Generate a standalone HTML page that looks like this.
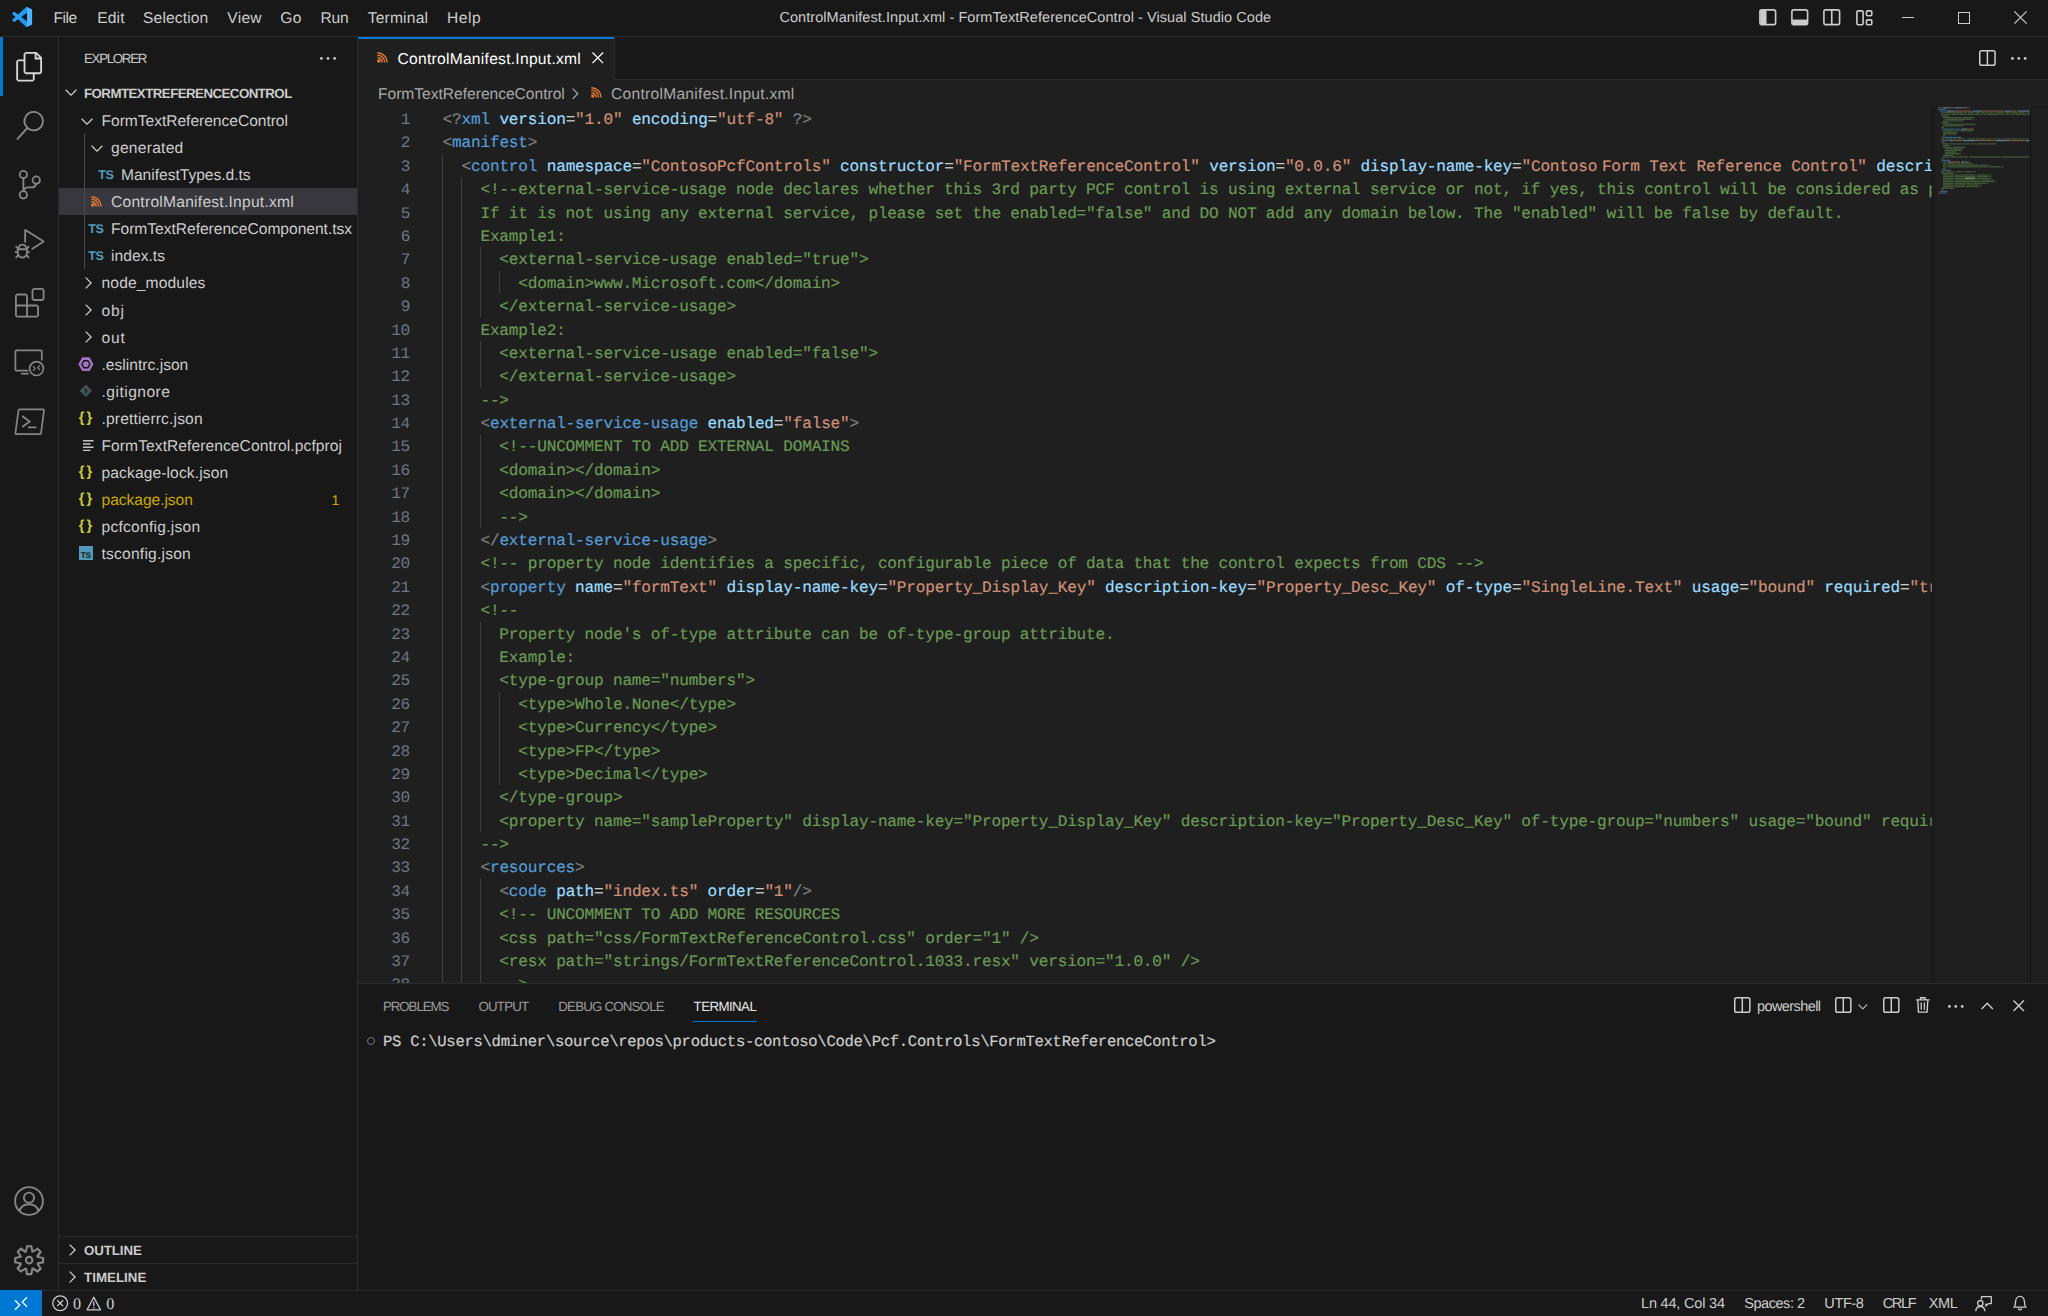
<!DOCTYPE html>
<html><head><meta charset="utf-8"><title>VS Code</title>
<style>
html,body{margin:0;padding:0;background:#181818;}
body{text-rendering:geometricPrecision;width:2048px;height:1316px;position:relative;overflow:hidden;font-family:"Liberation Sans",sans-serif;color:#ccc;}
.t{position:absolute;white-space:pre;display:block;}
.b{position:absolute;}
svg{position:absolute;overflow:visible;}
.code{position:absolute;left:442.6px;top:107px;width:1489px;height:876px;overflow:hidden;font-family:"Liberation Mono",monospace;font-size:16.1px;letter-spacing:-0.195px;}
.cl{-webkit-text-stroke:0.2px currentColor;position:absolute;left:0;height:23.39px;line-height:23.39px;padding-top:2px;white-space:pre;color:#ccc;}
.ln{position:absolute;left:0px;width:52.1px;text-align:right;height:23.39px;line-height:23.39px;padding-top:2px;font-family:"Liberation Mono",monospace;font-size:16.1px;letter-spacing:-0.195px;color:#6e7681;}
.p{color:#808080}.g{color:#569cd6}.a{color:#9cdcfe}.s{color:#ce9178}.c{color:#6a9955}.e{color:#cccccc}
.hs{display:inline-block;width:4.7px}

</style></head>
<body>
<div class="b" style="left:0px;top:0px;width:2048px;height:36px;background:#181818;"></div><div class="b" style="left:0px;top:36px;width:2048px;height:1px;background:#2b2b2b;"></div><div class="b" style="left:58px;top:37px;width:1px;height:1253px;background:#2b2b2b;"></div><div class="b" style="left:357px;top:37px;width:1px;height:1253px;background:#2b2b2b;"></div><div class="b" style="left:358px;top:37px;width:1690px;height:43px;background:#181818;"></div><div class="b" style="left:358px;top:79px;width:1690px;height:1px;background:#2b2b2b;"></div><div class="b" style="left:358px;top:80px;width:1690px;height:903px;background:#1f1f1f;"></div><div class="b" style="left:358px;top:983px;width:1690px;height:1px;background:#2b2b2b;"></div><div class="b" style="left:0px;top:1290px;width:2048px;height:1px;background:#2b2b2b;"></div><svg style="left:11.9px;top:7.1px;" width="20.3" height="19.8" viewBox="0 0 100 100">
<path d="M96.5 10.8 75.9.9a6.2 6.2 0 0 0-7.1 1.2L29.4 38 12.2 25a4.2 4.2 0 0 0-5.3.2L1.4 30.300a4.200 4.200 0 0 0 0 6.200L16.300 50 1.400 63.600a4.200 4.200 0 0 0 0 6.200l5.500 5a4.200 4.200 0 0 0 5.300.200L29.400 62l39.400 36a6.200 6.200 0 0 0 7.100 1.200l20.600-9.900a6.200 6.200 0 0 0 3.500-5.600V16.400a6.200 6.200 0 0 0-3.500-5.600zM75 72.700 45.100 50 75 27.300z" fill="#2a9df4"/>
<path d="M75.900.9a6.200 6.200 0 0 0-7.100 1.200L29.400 38l15.700 12L75 27.300v45.400L45.100 50 29.400 62l39.400 36a6.200 6.200 0 0 0 7.100 1.200l20.600-9.900a6.200 6.200 0 0 0 3.500-5.600V16.400a6.200 6.200 0 0 0-3.500-5.600z" fill="#1d8fe8" opacity=".55"/>
<path d="M68.800 2.100A6.200 6.200 0 0 1 75.900.9l20.600 9.900a6.200 6.200 0 0 1 3.500 5.600v67.200a6.200 6.200 0 0 1-3.500 5.600l-20.600 9.900a6.200 6.200 0 0 1-7.100-1.200c2.300 2.300 6.200.7 6.200-2.600V4.700c0-3.300-3.900-4.900-6.200-2.600z" fill="#4db4ff"/>
</svg><span id="m0" class="t" style="left:53.5px;top:6.70px;height:24px;line-height:24px;font-size:15.6px;color:#cccccc;font-weight:400;font-family:'Liberation Sans',sans-serif;letter-spacing:-0.447px;">File</span><span id="m1" class="t" style="left:97.2px;top:6.70px;height:24px;line-height:24px;font-size:15.6px;color:#cccccc;font-weight:400;font-family:'Liberation Sans',sans-serif;letter-spacing:0.142px;">Edit</span><span id="m2" class="t" style="left:143.1px;top:6.70px;height:24px;line-height:24px;font-size:15.6px;color:#cccccc;font-weight:400;font-family:'Liberation Sans',sans-serif;letter-spacing:0.118px;">Selection</span><span id="m3" class="t" style="left:227.3px;top:6.70px;height:24px;line-height:24px;font-size:15.6px;color:#cccccc;font-weight:400;font-family:'Liberation Sans',sans-serif;letter-spacing:0.256px;">View</span><span id="m4" class="t" style="left:280.2px;top:6.70px;height:24px;line-height:24px;font-size:15.6px;color:#cccccc;font-weight:400;font-family:'Liberation Sans',sans-serif;letter-spacing:0.488px;">Go</span><span id="m5" class="t" style="left:320.5px;top:6.70px;height:24px;line-height:24px;font-size:15.6px;color:#cccccc;font-weight:400;font-family:'Liberation Sans',sans-serif;letter-spacing:-0.205px;">Run</span><span id="m6" class="t" style="left:367.7px;top:6.70px;height:24px;line-height:24px;font-size:15.6px;color:#cccccc;font-weight:400;font-family:'Liberation Sans',sans-serif;letter-spacing:0.195px;">Terminal</span><span id="m7" class="t" style="left:447px;top:6.70px;height:24px;line-height:24px;font-size:15.6px;color:#cccccc;font-weight:400;font-family:'Liberation Sans',sans-serif;letter-spacing:0.507px;">Help</span><span id="title" class="t" style="left:779.4px;top:5.65px;height:24px;line-height:24px;font-size:14.5px;color:#cccccc;font-weight:400;font-family:'Liberation Sans',sans-serif;letter-spacing:0.062px;">ControlManifest.Input.xml - FormTextReferenceControl - Visual Studio Code</span><svg style="left:1759.3px;top:9px;" width="17.5" height="16.5" viewBox="0 0 17.5 16.5"><rect x="0.9" y="0.9" width="15.7" height="14.7" rx="1.8" fill="none" stroke="#cccccc" stroke-width="1.6"/><rect x="1.2" y="1.2" width="6.324999999999999" height="14.1" fill="#cccccc"/></svg><svg style="left:1791.3px;top:9px;" width="17.5" height="16.5" viewBox="0 0 17.5 16.5"><rect x="0.9" y="0.9" width="15.7" height="14.7" rx="1.8" fill="none" stroke="#cccccc" stroke-width="1.6"/><rect x="1.2" y="10.56" width="15.1" height="4.739999999999999" fill="#cccccc"/></svg><svg style="left:1823.3px;top:9px;" width="17.5" height="16.5" viewBox="0 0 17.5 16.5"><rect x="0.9" y="0.9" width="15.7" height="14.7" rx="1.8" fill="none" stroke="#cccccc" stroke-width="1.6"/><rect x="7.95" y="1" width="1.6" height="14.5" fill="#cccccc"/></svg><svg style="left:1856px;top:9.5px;" width="17" height="16" viewBox="0 0 17 16">
<rect x="0.9" y="0.9" width="6.2" height="13.8" rx="1.2" fill="none" stroke="#cccccc" stroke-width="1.6"/>
<rect x="10.4" y="0.9" width="5.4" height="4.8" rx="1.2" fill="none" stroke="#cccccc" stroke-width="1.6"/>
<rect x="10.4" y="9.9" width="5.4" height="4.8" rx="1.2" fill="none" stroke="#cccccc" stroke-width="1.6"/></svg><div class="b" style="left:1902.2px;top:17.2px;width:12.2px;height:1.2px;background:#cccccc;"></div><div class="b" style="left:1957.6px;top:11.5px;width:10.3px;height:10.3px;border:1.2px solid #cccccc;box-sizing:content-box"></div><svg style="left:2014.3px;top:11.3px;" width="13" height="13" viewBox="0 0 13 13"><path d="M0.4 0.4L12.6 12.6M12.6 0.4L0.4 12.6" stroke="#cccccc" stroke-width="1.2" fill="none"/></svg><div class="b" style="left:0px;top:37px;width:2.5px;height:59px;background:#0078d4;"></div><svg style="left:14.75px;top:51.75px;" width="29.5" height="29.5" viewBox="0 0 24 24"><path fill="#d7d7d7"  d="M17.5 0h-9L7 1.500V6H2.500L1 7.500v15.070L2.500 24h12.070L16 22.570V18h4.700l1.300-1.430V4.500L17.500 0zm0 2.120l2.380 2.380H17.500V2.120zm-3 20.380h-12v-15H7v9.070L8.500 18h6v4.500zm6-6h-12v-15H16V6h4.500v10.500z"/></svg><svg style="left:14.75px;top:110.75px;" width="29.5" height="29.5" viewBox="0 0 24 24"><path fill="#868686"  d="M15.250 0a8.250 8.250 0 0 0-6.180 13.720L1 22.880l1.120 1 8.050-9.120A8.251 8.251 0 1 0 15.250.010V0zm0 15a6.750 6.750 0 1 1 0-13.500 6.750 6.750 0 0 1 0 13.500z"/></svg><svg style="left:14.75px;top:169.75px;" width="29.5" height="29.5" viewBox="0 0 24 24"><path fill="#868686"  d="M21.007 8.222A3.738 3.738 0 0 0 15.045 5.200a3.737 3.737 0 0 0 1.156 6.583 2.988 2.988 0 0 1-2.668 1.670h-2.990a4.456 4.456 0 0 0-2.989 1.165V7.400a3.737 3.737 0 1 0-1.494 0v9.117a3.776 3.776 0 1 0 1.816.099 2.990 2.990 0 0 1 2.668-1.667h2.990a4.484 4.484 0 0 0 4.223-3.039 3.736 3.736 0 0 0 3.250-3.687zM4.565 3.738a2.242 2.242 0 1 1 4.484 0 2.242 2.242 0 0 1-4.484 0zm4.484 16.441a2.242 2.242 0 1 1-4.484 0 2.242 2.242 0 0 1 4.484 0zm8.221-9.715a2.242 2.242 0 1 1 0-4.485 2.242 2.242 0 0 1 0 4.485z"/></svg><svg style="left:14.75px;top:228.75px;" width="29.5" height="29.5" viewBox="0 0 24 24"><path fill="#868686"  d="M10.940 13.500l-1.320 1.320a3.730 3.730 0 0 0-7.240 0L1.060 13.500 0 14.560l1.720 1.720-.220.220V18H0v1.500h1.500v.080c.077.489.214.966.410 1.420L0 22.940 1.060 24l1.650-1.650A4.308 4.308 0 0 0 6 24a4.310 4.310 0 0 0 3.290-1.650L10.940 24 12 22.940 10.090 21c.198-.464.336-.951.410-1.450v-.100H12V18h-1.500v-1.500l-.220-.220L12 14.560l-1.060-1.060zM6 13.500a2.250 2.250 0 0 1 2.250 2.250h-4.500A2.250 2.250 0 0 1 6 13.500zm3 6a3.330 3.330 0 0 1-3 3 3.330 3.330 0 0 1-3-3v-2.250h6v2.250zm14.760-9.900v1.260L13.500 17.370V15.600l8.500-5.370L9 2v9.460a5.070 5.070 0 0 0-1.500-.720V.630L8.640 0l15.120 9.600z"/></svg><svg style="left:14.75px;top:287.75px;" width="29.5" height="29.5" viewBox="0 0 24 24"><path fill="#868686"  d="M13.500 1.500L15 0h7.500L24 1.500V9l-1.500 1.500H15L13.500 9V1.500zm1.500 0V9h7.500V1.500H15zM0 15V6l1.500-1.500H9L10.500 6v7.500H18l1.500 1.500v7.500L18 24H1.500L0 22.500V15zm9-1.500V6H1.500v7.500H9zM9 15H1.500v7.500H9V15zm1.500 7.500H18V15h-7.500v7.500z"/></svg><svg style="left:0px;top:340px;" width="59" height="100" viewBox="0 340 59 100">
<path d="M28.300 370.600H16.600a1.200 1.200 0 0 1-1.200-1.200V351.500a1.200 1.200 0 0 1 1.200-1.200H40.600a1.200 1.200 0 0 1 1.200 1.200V360.600" fill="none" stroke="#868686" stroke-width="1.700"/>
<path d="M21 373.700H28.700" fill="none" stroke="#868686" stroke-width="1.700"/>
<circle cx="36.500" cy="368.600" r="6.900" fill="none" stroke="#868686" stroke-width="1.700"/>
<path d="M33.100 366.200l2.100 2.300-2.100 2.300M39.900 365.400l-2.100 2.300 2.100 2.300" fill="none" stroke="#868686" stroke-width="1.200"/>
<path d="M19.600 409.300H43.100a0.900 0.900 0 0 1 0.900 1l-3 23a1.100 1.100 0 0 1-1.100 0.900H16.300a0.900 0.900 0 0 1-0.900-1l3.100-23a1.100 1.100 0 0 1 1.100-0.900z" fill="none" stroke="#868686" stroke-width="1.700" stroke-linejoin="round"/>
<path d="M22.200 416l7.400 5.500-7.400 5.500M28 427.400h8.400" fill="none" stroke="#868686" stroke-width="1.800"/></svg><svg style="left:14.4px;top:1186px;" width="30" height="30" viewBox="0 0 30 30">
<circle cx="15" cy="15" r="13.900" fill="none" stroke="#868686" stroke-width="1.900"/>
<circle cx="15" cy="11.700" r="5.100" fill="none" stroke="#868686" stroke-width="1.900"/>
<path d="M5.600 25.200c1-4.500 4.800-7 9.400-7s8.400 2.500 9.400 7" fill="none" stroke="#868686" stroke-width="1.900"/></svg><svg style="left:12.2px;top:1243px;" width="34.3" height="34.3" viewBox="0 0 16 16"><path fill="#868686" fill-rule="evenodd" d="M9.100 4.400L8.600 2H7.400l-.500 2.400-.700.300-2-1.300-.900.800 1.300 2-.200.700-2.400.500v1.200l2.400.500.300.800-1.300 2 .800.800 2-1.300.800.300.400 2.300h1.200l.500-2.400.800-.300 2 1.300.800-.800-1.300-2 .300-.800 2.300-.400V7.400l-2.400-.500-.300-.800 1.300-2-.800-.800-2 1.300-.700-.200zM9.400 1l.500 2.400L12 2.100l2 2-1.400 2.100 2.400.400v2.800l-2.400.500L14 12l-2 2-2.100-1.400-.500 2.400H6.600l-.500-2.400L4 13.900l-2-2 1.400-2.100L1 9.400V6.600l2.400-.500L2.100 4l2-2 2.100 1.400.400-2.400h2.800zm.600 7c0 1.100-.900 2-2 2s-2-.900-2-2 .900-2 2-2 2 .900 2 2zM8 9c.6 0 1-.4 1-1s-.4-1-1-1-1 .4-1 1 .4 1 1 1z"/></svg><span id="sb_title" class="t" style="left:84px;top:46.50px;height:24px;line-height:24px;font-size:13.3px;color:#cccccc;font-weight:400;font-family:'Liberation Sans',sans-serif;letter-spacing:-1.300px;">EXPLORER</span><svg style="left:320.4px;top:56.9px;" width="16.0" height="2.8" viewBox="0 0 16.0 2.8"><circle cx="1.40" cy="1.4" r="1.4" fill="#cccccc"/><circle cx="8.00" cy="1.4" r="1.4" fill="#cccccc"/><circle cx="14.60" cy="1.4" r="1.4" fill="#cccccc"/></svg><svg style="left:64.5px;top:89.4px;" width="12.0" height="7.0" viewBox="0 0 12 7"><path d="M0.6 0.700L6 6.100 11.400 0.700" fill="none" stroke="#cccccc" stroke-width="1.300"/></svg><span id="sb_root" class="t" style="left:84px;top:82.30px;height:24px;line-height:24px;font-size:13.3px;color:#cccccc;font-weight:700;font-family:'Liberation Sans',sans-serif;letter-spacing:-0.547px;">FORMTEXTREFERENCECONTROL</span><div class="b" style="left:59px;top:188.18px;width:298px;height:27.06px;background:#37373d;"></div><div class="b" style="left:84px;top:134.06px;width:1px;height:135.29999999999998px;background:#4a4a4a;"></div><span id="r0" class="t" style="left:101.5px;top:110.13px;height:24px;line-height:24px;font-size:15.6px;color:#cccccc;font-weight:400;font-family:'Liberation Sans',sans-serif;letter-spacing:-0.031px;">FormTextReferenceControl</span><svg style="left:81.3px;top:117.53px;" width="12.0" height="7.0" viewBox="0 0 12 7"><path d="M0.6 0.700L6 6.100 11.400 0.700" fill="none" stroke="#cccccc" stroke-width="1.300"/></svg><span id="r1" class="t" style="left:111px;top:137.19px;height:24px;line-height:24px;font-size:15.6px;color:#cccccc;font-weight:400;font-family:'Liberation Sans',sans-serif;letter-spacing:0.258px;">generated</span><svg style="left:91.2px;top:144.59px;" width="12.0" height="7.0" viewBox="0 0 12 7"><path d="M0.6 0.700L6 6.100 11.400 0.700" fill="none" stroke="#cccccc" stroke-width="1.300"/></svg><span id="r2" class="t" style="left:121px;top:164.25px;height:24px;line-height:24px;font-size:15.6px;color:#cccccc;font-weight:400;font-family:'Liberation Sans',sans-serif;letter-spacing:-0.024px;">ManifestTypes.d.ts</span><span id="ts98_174" class="t" style="left:98.3px;top:162.85px;height:24px;line-height:24px;font-size:12.6px;color:#519aba;font-weight:700;font-family:'Liberation Sans',sans-serif;letter-spacing:0.000px;letter-spacing:-0.4px;">TS</span><span id="r3" class="t" style="left:111px;top:191.31px;height:24px;line-height:24px;font-size:15.6px;color:#cccccc;font-weight:400;font-family:'Liberation Sans',sans-serif;letter-spacing:0.249px;">ControlManifest.Input.xml</span><svg style="left:90.5px;top:196.31px;" width="10.5" height="10.8" viewBox="0 0 21 21.600"><circle cx="3.600" cy="18" r="3.600" fill="#e37933"/>
<path d="M0.600 11.200a9.800 9.800 0 0 1 9.800 9.800" fill="none" stroke="#e37933" stroke-width="2.900"/>
<path d="M0.600 6.300a14.700 14.700 0 0 1 14.700 14.700" fill="none" stroke="#e37933" stroke-width="2.900"/>
<path d="M0.600 1.400a19.600 19.600 0 0 1 19.600 19.600" fill="none" stroke="#e37933" stroke-width="2.900"/></svg><span id="r4" class="t" style="left:111px;top:218.37px;height:24px;line-height:24px;font-size:15.6px;color:#cccccc;font-weight:400;font-family:'Liberation Sans',sans-serif;letter-spacing:-0.025px;">FormTextReferenceComponent.tsx</span><span id="ts88_228" class="t" style="left:88.3px;top:216.97px;height:24px;line-height:24px;font-size:12.6px;color:#519aba;font-weight:700;font-family:'Liberation Sans',sans-serif;letter-spacing:0.000px;letter-spacing:-0.4px;">TS</span><span id="r5" class="t" style="left:111px;top:245.43px;height:24px;line-height:24px;font-size:15.6px;color:#cccccc;font-weight:400;font-family:'Liberation Sans',sans-serif;letter-spacing:0.036px;">index.ts</span><span id="ts88_255" class="t" style="left:88.3px;top:244.03px;height:24px;line-height:24px;font-size:12.6px;color:#519aba;font-weight:700;font-family:'Liberation Sans',sans-serif;letter-spacing:0.000px;letter-spacing:-0.4px;">TS</span><span id="r6" class="t" style="left:101.5px;top:272.49px;height:24px;line-height:24px;font-size:15.6px;color:#cccccc;font-weight:400;font-family:'Liberation Sans',sans-serif;letter-spacing:0.144px;">node_modules</span><svg style="left:84.8px;top:276.89px;" width="7.0" height="12.0" viewBox="0 0 7 12"><path d="M0.700 0.600L6.100 6 0.700 11.400" fill="none" stroke="#cccccc" stroke-width="1.300"/></svg><span id="r7" class="t" style="left:101.5px;top:299.55px;height:24px;line-height:24px;font-size:15.6px;color:#cccccc;font-weight:400;font-family:'Liberation Sans',sans-serif;letter-spacing:0.800px;">obj</span><svg style="left:84.8px;top:303.94999999999993px;" width="7.0" height="12.0" viewBox="0 0 7 12"><path d="M0.700 0.600L6.100 6 0.700 11.400" fill="none" stroke="#cccccc" stroke-width="1.300"/></svg><span id="r8" class="t" style="left:101.5px;top:326.61px;height:24px;line-height:24px;font-size:15.6px;color:#cccccc;font-weight:400;font-family:'Liberation Sans',sans-serif;letter-spacing:0.800px;">out</span><svg style="left:84.8px;top:331.01px;" width="7.0" height="12.0" viewBox="0 0 7 12"><path d="M0.700 0.600L6.100 6 0.700 11.400" fill="none" stroke="#cccccc" stroke-width="1.300"/></svg><span id="r9" class="t" style="left:101.5px;top:353.67px;height:24px;line-height:24px;font-size:15.6px;color:#cccccc;font-weight:400;font-family:'Liberation Sans',sans-serif;letter-spacing:0.010px;">.eslintrc.json</span><svg style="left:78px;top:356.9699999999999px;" width="15.8" height="14.4" viewBox="0 0 15.800 14.400"><path d="M4.200 0.300h7.400l3.900 6.900-3.900 6.900H4.200L0.300 7.200z" fill="#a074c4"/><path d="M5.900 3.700h4l2 3.500-2 3.500h-4l-2-3.500z" fill="none" stroke="#181818" stroke-width="1.400"/></svg><span id="r10" class="t" style="left:101.5px;top:380.73px;height:24px;line-height:24px;font-size:15.6px;color:#cccccc;font-weight:400;font-family:'Liberation Sans',sans-serif;letter-spacing:0.472px;">.gitignore</span><svg style="left:79px;top:384.12999999999994px;" width="13.6" height="13.6" viewBox="0 0 13 13"><rect x="2.300" y="2.300" width="8.400" height="8.400" fill="#41535b" transform="rotate(45 6.500 6.500)"/><path d="M5 4.200l3 3M6.500 5.700v3.500" stroke="#181818" stroke-width="1" fill="none"/></svg><span id="r11" class="t" style="left:101.5px;top:407.79px;height:24px;line-height:24px;font-size:15.6px;color:#cccccc;font-weight:400;font-family:'Liberation Sans',sans-serif;letter-spacing:0.154px;">.prettierrc.json</span><span id="js418" class="t" style="left:78.7px;top:405.89px;height:24px;line-height:24px;font-size:14.6px;color:#cbcb41;font-weight:700;font-family:'Liberation Sans',sans-serif;letter-spacing:0.000px;letter-spacing:-0.9px;">{ }</span><span id="r12" class="t" style="left:101.5px;top:434.85px;height:24px;line-height:24px;font-size:15.6px;color:#cccccc;font-weight:400;font-family:'Liberation Sans',sans-serif;letter-spacing:0.070px;">FormTextReferenceControl.pcfproj</span><svg style="left:83px;top:439.74999999999994px;" width="10.5" height="11" viewBox="0 0 10.500 11"><path d="M0 0.800h10.500M0 4h7.500M0 7.200h10.500M0 10.400h7.500" stroke="#c5c5c5" stroke-width="1.400" fill="none"/></svg><span id="r13" class="t" style="left:101.5px;top:461.91px;height:24px;line-height:24px;font-size:15.6px;color:#cccccc;font-weight:400;font-family:'Liberation Sans',sans-serif;letter-spacing:0.111px;">package-lock.json</span><span id="js472" class="t" style="left:78.7px;top:460.01px;height:24px;line-height:24px;font-size:14.6px;color:#cbcb41;font-weight:700;font-family:'Liberation Sans',sans-serif;letter-spacing:0.000px;letter-spacing:-0.9px;">{ }</span><span id="r14" class="t" style="left:101.5px;top:488.97px;height:24px;line-height:24px;font-size:15.6px;color:#cca700;font-weight:400;font-family:'Liberation Sans',sans-serif;letter-spacing:-0.046px;">package.json</span><span id="js499" class="t" style="left:78.7px;top:487.07px;height:24px;line-height:24px;font-size:14.6px;color:#cbcb41;font-weight:700;font-family:'Liberation Sans',sans-serif;letter-spacing:0.000px;letter-spacing:-0.9px;">{ }</span><span id="r15" class="t" style="left:101.5px;top:516.03px;height:24px;line-height:24px;font-size:15.6px;color:#cccccc;font-weight:400;font-family:'Liberation Sans',sans-serif;letter-spacing:0.249px;">pcfconfig.json</span><span id="js526" class="t" style="left:78.7px;top:514.13px;height:24px;line-height:24px;font-size:14.6px;color:#cbcb41;font-weight:700;font-family:'Liberation Sans',sans-serif;letter-spacing:0.000px;letter-spacing:-0.9px;">{ }</span><span id="r16" class="t" style="left:101.5px;top:543.09px;height:24px;line-height:24px;font-size:15.6px;color:#cccccc;font-weight:400;font-family:'Liberation Sans',sans-serif;letter-spacing:0.218px;">tsconfig.json</span><div class="b" style="left:79px;top:546.49px;width:14px;height:14px;background:#519aba;"></div><span id="tsc" class="t" style="left:80.7px;top:543.29px;height:24px;line-height:24px;font-size:8.3px;color:#181818;font-weight:700;font-family:'Liberation Sans',sans-serif;letter-spacing:0.000px;letter-spacing:-0.3px;">TS</span><span id="badge" class="t" style="left:331.5px;top:488.87px;height:24px;line-height:24px;font-size:14.2px;color:#cca700;font-weight:400;font-family:'Liberation Sans',sans-serif;letter-spacing:0.000px;">1</span><div class="b" style="left:59px;top:1236px;width:298px;height:1px;background:#2b2b2b;"></div><div class="b" style="left:59px;top:1263px;width:298px;height:1px;background:#2b2b2b;"></div><svg style="left:68.5px;top:1244.0px;" width="7.0" height="12.0" viewBox="0 0 7 12"><path d="M0.700 0.600L6.100 6 0.700 11.400" fill="none" stroke="#cccccc" stroke-width="1.300"/></svg><svg style="left:68.5px;top:1271.0px;" width="7.0" height="12.0" viewBox="0 0 7 12"><path d="M0.700 0.600L6.100 6 0.700 11.400" fill="none" stroke="#cccccc" stroke-width="1.300"/></svg><span id="outline" class="t" style="left:84px;top:1238.70px;height:24px;line-height:24px;font-size:13.3px;color:#cccccc;font-weight:700;font-family:'Liberation Sans',sans-serif;letter-spacing:-0.093px;">OUTLINE</span><span id="timeline" class="t" style="left:84px;top:1265.70px;height:24px;line-height:24px;font-size:13.3px;color:#cccccc;font-weight:700;font-family:'Liberation Sans',sans-serif;letter-spacing:0.034px;">TIMELINE</span><div class="b" style="left:358px;top:37px;width:256px;height:43px;background:#1f1f1f;"></div><div class="b" style="left:358px;top:37px;width:256px;height:2px;background:#0078d4;"></div><div class="b" style="left:614px;top:37px;width:1px;height:43px;background:#2b2b2b;"></div><svg style="left:377.1px;top:52.4px;" width="10.5" height="10.8" viewBox="0 0 21 21.600"><circle cx="3.600" cy="18" r="3.600" fill="#e37933"/>
<path d="M0.600 11.200a9.800 9.800 0 0 1 9.800 9.800" fill="none" stroke="#e37933" stroke-width="2.900"/>
<path d="M0.600 6.300a14.700 14.700 0 0 1 14.700 14.700" fill="none" stroke="#e37933" stroke-width="2.900"/>
<path d="M0.600 1.400a19.600 19.600 0 0 1 19.600 19.600" fill="none" stroke="#e37933" stroke-width="2.900"/></svg><span id="tab" class="t" style="left:397.5px;top:48.10px;height:24px;line-height:24px;font-size:15.6px;color:#ffffff;font-weight:400;font-family:'Liberation Sans',sans-serif;letter-spacing:0.270px;">ControlManifest.Input.xml</span><svg style="left:592px;top:51.8px;" width="11.6" height="11.6" viewBox="0 0 12 12"><path d="M0.500 0.500L11.500 11.500M11.500 0.500L0.500 11.500" stroke="#ffffff" stroke-width="1.350" fill="none"/></svg><svg style="left:1979px;top:49.5px;" width="16.8" height="16" viewBox="0 0 16.8 16"><rect x="0.75" y="0.75" width="15.3" height="14.5" rx="1.800" fill="none" stroke="#cccccc" stroke-width="1.5"/><path d="M8.4 0.75V15.25" stroke="#cccccc" stroke-width="1.5"/></svg><svg style="left:2011.3px;top:56.6px;" width="15.600000000000001" height="2.8" viewBox="0 0 15.600000000000001 2.8"><circle cx="1.40" cy="1.4" r="1.4" fill="#cccccc"/><circle cx="7.80" cy="1.4" r="1.4" fill="#cccccc"/><circle cx="14.20" cy="1.4" r="1.4" fill="#cccccc"/></svg><span id="bc1" class="t" style="left:378px;top:83.30px;height:24px;line-height:24px;font-size:15.6px;color:#a9a9a9;font-weight:400;font-family:'Liberation Sans',sans-serif;letter-spacing:-0.018px;">FormTextReferenceControl</span><svg style="left:572.175px;top:87.6px;" width="6.6499999999999995" height="11.399999999999999" viewBox="0 0 7 12"><path d="M0.700 0.600L6.100 6 0.700 11.400" fill="none" stroke="#a9a9a9" stroke-width="1.300"/></svg><svg style="left:590.8px;top:87.39999999999999px;" width="10.5" height="10.8" viewBox="0 0 21 21.600"><circle cx="3.600" cy="18" r="3.600" fill="#e37933"/>
<path d="M0.600 11.200a9.800 9.800 0 0 1 9.800 9.800" fill="none" stroke="#e37933" stroke-width="2.900"/>
<path d="M0.600 6.300a14.700 14.700 0 0 1 14.700 14.700" fill="none" stroke="#e37933" stroke-width="2.900"/>
<path d="M0.600 1.400a19.600 19.600 0 0 1 19.600 19.600" fill="none" stroke="#e37933" stroke-width="2.900"/></svg><span id="bc2" class="t" style="left:611px;top:83.30px;height:24px;line-height:24px;font-size:15.6px;color:#a9a9a9;font-weight:400;font-family:'Liberation Sans',sans-serif;letter-spacing:0.270px;">ControlManifest.Input.xml</span><span id="pt0" class="t" style="left:383px;top:994.90px;height:24px;line-height:24px;font-size:13.3px;color:#9d9d9d;font-weight:400;font-family:'Liberation Sans',sans-serif;letter-spacing:-1.072px;">PROBLEMS</span><span id="pt1" class="t" style="left:478.4px;top:994.90px;height:24px;line-height:24px;font-size:13.3px;color:#9d9d9d;font-weight:400;font-family:'Liberation Sans',sans-serif;letter-spacing:-0.774px;">OUTPUT</span><span id="pt2" class="t" style="left:558.3px;top:994.90px;height:24px;line-height:24px;font-size:13.3px;color:#9d9d9d;font-weight:400;font-family:'Liberation Sans',sans-serif;letter-spacing:-0.810px;">DEBUG CONSOLE</span><span id="pt3" class="t" style="left:693.6px;top:994.90px;height:24px;line-height:24px;font-size:13.3px;color:#e7e7e7;font-weight:400;font-family:'Liberation Sans',sans-serif;letter-spacing:-0.576px;">TERMINAL</span><div class="b" style="left:693px;top:1020.5px;width:64px;height:1.3px;background:#0078d4;"></div><div class="b" style="left:366.9px;top:1036.5px;width:6.4px;height:6.4px;border-radius:50%;border:1.7px solid #757575;box-sizing:content-box"></div><span id="term" class="t" style="left:383px;top:1029.50px;height:24px;line-height:24px;font-size:15.6px;color:#cccccc;font-weight:400;font-family:'Liberation Mono',monospace;letter-spacing:-0.309px;-webkit-text-stroke:0.2px currentColor;">PS C:\Users\dminer\source\repos\products-contoso\Code\Pcf.Controls\FormTextReferenceControl&gt;</span><svg style="left:1734px;top:997.2px;" width="16.6" height="16" viewBox="0 0 16.6 16"><rect x="0.75" y="0.75" width="15.100000000000001" height="14.5" rx="1.800" fill="none" stroke="#cccccc" stroke-width="1.5"/><path d="M8.3 0.75V15.25" stroke="#cccccc" stroke-width="1.5"/></svg><span id="pwsh" class="t" style="left:1757px;top:994.80px;height:24px;line-height:24px;font-size:14.5px;color:#cccccc;font-weight:400;font-family:'Liberation Sans',sans-serif;letter-spacing:-0.581px;">powershell</span><svg style="left:1835.2px;top:997.2px;" width="16.6" height="16" viewBox="0 0 16.6 16"><rect x="0.75" y="0.75" width="15.100000000000001" height="14.5" rx="1.800" fill="none" stroke="#cccccc" stroke-width="1.5"/><path d="M8.3 0.75V15.25" stroke="#cccccc" stroke-width="1.5"/></svg><svg style="left:1857.9px;top:1003.7px;" width="9.600000000000001" height="5.6000000000000005" viewBox="0 0 12 7"><path d="M0.6 0.700L6 6.100 11.400 0.700" fill="none" stroke="#cccccc" stroke-width="1.300"/></svg><svg style="left:1883.3px;top:997.2px;" width="16.6" height="16" viewBox="0 0 16.6 16"><rect x="0.75" y="0.75" width="15.100000000000001" height="14.5" rx="1.800" fill="none" stroke="#cccccc" stroke-width="1.5"/><path d="M8.3 0.75V15.25" stroke="#cccccc" stroke-width="1.5"/></svg><svg style="left:1915.5px;top:997.3px;" width="13.6" height="15.8" viewBox="0 0 13.600 15.800"><path d="M0 2.900h13.600M4.500 2.700V0.700h4.600v2" fill="none" stroke="#cccccc" stroke-width="1.400"/>
<path d="M1.800 3.200l0.700 11.900h8.600l0.700-11.900" fill="none" stroke="#cccccc" stroke-width="1.400"/>
<path d="M5.200 5.500v7.200M8.400 5.500v7.200" stroke="#cccccc" stroke-width="1.300"/></svg><svg style="left:1947.6px;top:1004.6px;" width="15.600000000000001" height="2.8" viewBox="0 0 15.600000000000001 2.8"><circle cx="1.40" cy="1.4" r="1.4" fill="#cccccc"/><circle cx="7.80" cy="1.4" r="1.4" fill="#cccccc"/><circle cx="14.20" cy="1.4" r="1.4" fill="#cccccc"/></svg><svg style="left:1981px;top:1001.5px;" width="12.4" height="7.6" viewBox="0 0 12.400 7.600"><path d="M0.600 7L6.200 1.300 11.800 7" fill="none" stroke="#cccccc" stroke-width="1.400"/></svg><svg style="left:2013px;top:1000.4px;" width="11.4" height="11.4" viewBox="0 0 11.400 11.400"><path d="M0.500 0.500L10.900 10.900M10.900 0.500L0.500 10.900" stroke="#cccccc" stroke-width="1.400" fill="none"/></svg><div class="b" style="left:0px;top:1290px;width:42px;height:26px;background:#0078d4;"></div><svg style="left:14px;top:1295.5px;" width="14" height="15" viewBox="0 0 14 15"><path d="M1 4.200L5.800 9 1 13.800M13 1.200L8.200 6 13 10.800" fill="none" stroke="#ffffff" stroke-width="1.250"/></svg><svg style="left:52px;top:1295.3px;" width="16.4" height="16.4" viewBox="0 0 16.400 16.400"><circle cx="8.200" cy="8.200" r="7.400" fill="none" stroke="#cccccc" stroke-width="1.300"/><path d="M5.300 5.300l5.800 5.800M11.100 5.300l-5.800 5.800" stroke="#cccccc" stroke-width="1.300"/></svg><span id="st_e" class="t" style="left:73px;top:1292.20px;height:24px;line-height:24px;font-size:16.2px;color:#cccccc;font-weight:400;font-family:'Liberation Sans',sans-serif;letter-spacing:0.000px;font-family:'Liberation Serif',serif;">0</span><svg style="left:86px;top:1295.8px;" width="15.6" height="14.6" viewBox="0 0 15.400 14.600"><path d="M7.700 1.300L14.400 13.800H1z" fill="none" stroke="#cccccc" stroke-width="1.300" stroke-linejoin="round"/><path d="M7.700 5.600v4.300M7.700 11v1.500" stroke="#cccccc" stroke-width="1.300"/></svg><span id="st_w" class="t" style="left:106.2px;top:1292.20px;height:24px;line-height:24px;font-size:16.2px;color:#cccccc;font-weight:400;font-family:'Liberation Sans',sans-serif;letter-spacing:0.000px;font-family:'Liberation Serif',serif;">0</span><span id="st1" class="t" style="left:1641px;top:1292.00px;height:24px;line-height:24px;font-size:14.5px;color:#cccccc;font-weight:400;font-family:'Liberation Sans',sans-serif;letter-spacing:-0.189px;">Ln 44, Col 34</span><span id="st2" class="t" style="left:1744.3px;top:1292.00px;height:24px;line-height:24px;font-size:14.5px;color:#cccccc;font-weight:400;font-family:'Liberation Sans',sans-serif;letter-spacing:-0.463px;">Spaces: 2</span><span id="st3" class="t" style="left:1824.3px;top:1292.00px;height:24px;line-height:24px;font-size:14.5px;color:#cccccc;font-weight:400;font-family:'Liberation Sans',sans-serif;letter-spacing:-0.373px;">UTF-8</span><span id="st4" class="t" style="left:1882.7px;top:1292.00px;height:24px;line-height:24px;font-size:14.5px;color:#cccccc;font-weight:400;font-family:'Liberation Sans',sans-serif;letter-spacing:-1.300px;">CRLF</span><span id="st5" class="t" style="left:1928.7px;top:1292.00px;height:24px;line-height:24px;font-size:14.5px;color:#cccccc;font-weight:400;font-family:'Liberation Sans',sans-serif;letter-spacing:-0.364px;">XML</span><svg style="left:1975px;top:1295.5px;" width="17" height="15.5" viewBox="0 0 17 15.500"><circle cx="5.300" cy="7.200" r="2.700" fill="none" stroke="#cccccc" stroke-width="1.300"/>
<path d="M0.700 15.200c0.300-3 2-4.700 4.600-4.700s4.300 1.700 4.600 4.700" fill="none" stroke="#cccccc" stroke-width="1.300"/>
<path d="M6.500 3.300V0.700h9.800v6.900h-2.800l-2.600 2.400V7.600" fill="none" stroke="#cccccc" stroke-width="1.300" stroke-linejoin="round"/></svg><svg style="left:2013.2px;top:1295.3px;" width="14" height="16" viewBox="0 0 14 16"><path d="M1 12.200h12c-1.300-1.300-1.600-2.600-1.600-5.600 0-3-1.900-5.300-4.400-5.300S2.600 3.600 2.600 6.600c0 3-.3 4.300-1.600 5.600z" fill="none" stroke="#cccccc" stroke-width="1.300" stroke-linejoin="round"/>
<path d="M5.400 13.200c0 .9.700 1.600 1.600 1.600s1.600-.7 1.600-1.600" fill="none" stroke="#cccccc" stroke-width="1.300"/></svg><div class="code"><div class="cl" style="top:0.00px"><span class="p">&lt;?</span><span class="g">xml</span> <span class="a">version</span><span class="e">=</span><span class="s">"1.0"</span> <span class="a">encoding</span><span class="e">=</span><span class="s">"utf-8"</span> <span class="p">?&gt;</span></div><div class="cl" style="top:23.39px"><span class="p">&lt;</span><span class="g">manifest</span><span class="p">&gt;</span></div><div class="cl" style="top:46.78px">  <span class="p">&lt;</span><span class="g">control</span> <span class="a">namespace</span><span class="e">=</span><span class="s">"ContosoPcfControls"</span> <span class="a">constructor</span><span class="e">=</span><span class="s">"FormTextReferenceControl"</span> <span class="a">version</span><span class="e">=</span><span class="s">"0.0.6"</span> <span class="a">display-name-key</span><span class="e">=</span><span class="s">"Contoso<span class="hs"> </span>Form Text Reference Control"</span> <span class="a">description-key</span><span class="e">=</span><span class="s">"Contoso Form Text"</span><span class="p">&gt;</span></div><div class="cl" style="top:70.17px"><span class="c">    &lt;!--external-service-usage node declares whether this 3rd party PCF control is using external service or not, if yes, this control will be considered as premium and please also add the external domain it is using.</span></div><div class="cl" style="top:93.56px"><span class="c">    If it is not using any external service, please set the enabled="false" and DO NOT add any domain below. The "enabled" will be false by default.</span></div><div class="cl" style="top:116.95px"><span class="c">    Example1:</span></div><div class="cl" style="top:140.34px"><span class="c">      &lt;external-service-usage enabled="true"&gt;</span></div><div class="cl" style="top:163.73px"><span class="c">        &lt;domain&gt;www.Microsoft.com&lt;/domain&gt;</span></div><div class="cl" style="top:187.12px"><span class="c">      &lt;/external-service-usage&gt;</span></div><div class="cl" style="top:210.51px"><span class="c">    Example2:</span></div><div class="cl" style="top:233.90px"><span class="c">      &lt;external-service-usage enabled="false"&gt;</span></div><div class="cl" style="top:257.29px"><span class="c">      &lt;/external-service-usage&gt;</span></div><div class="cl" style="top:280.68px"><span class="c">    --&gt;</span></div><div class="cl" style="top:304.07px">    <span class="p">&lt;</span><span class="g">external-service-usage</span> <span class="a">enabled</span><span class="e">=</span><span class="s">"false"</span><span class="p">&gt;</span></div><div class="cl" style="top:327.46px"><span class="c">      &lt;!--UNCOMMENT TO ADD EXTERNAL DOMAINS</span></div><div class="cl" style="top:350.85px"><span class="c">      &lt;domain&gt;&lt;/domain&gt;</span></div><div class="cl" style="top:374.24px"><span class="c">      &lt;domain&gt;&lt;/domain&gt;</span></div><div class="cl" style="top:397.63px"><span class="c">      --&gt;</span></div><div class="cl" style="top:421.02px">    <span class="p">&lt;/</span><span class="g">external-service-usage</span><span class="p">&gt;</span></div><div class="cl" style="top:444.41px"><span class="c">    &lt;!-- property node identifies a specific, configurable piece of data that the control expects from CDS --&gt;</span></div><div class="cl" style="top:467.80px">    <span class="p">&lt;</span><span class="g">property</span> <span class="a">name</span><span class="e">=</span><span class="s">"formText"</span> <span class="a">display-name-key</span><span class="e">=</span><span class="s">"Property_Display_Key"</span> <span class="a">description-key</span><span class="e">=</span><span class="s">"Property_Desc_Key"</span> <span class="a">of-type</span><span class="e">=</span><span class="s">"SingleLine.Text"</span> <span class="a">usage</span><span class="e">=</span><span class="s">"bound"</span> <span class="a">required</span><span class="e">=</span><span class="s">"true"</span> <span class="p">/&gt;</span></div><div class="cl" style="top:491.19px"><span class="c">    &lt;!--</span></div><div class="cl" style="top:514.58px"><span class="c">      Property node's of-type attribute can be of-type-group attribute.</span></div><div class="cl" style="top:537.97px"><span class="c">      Example:</span></div><div class="cl" style="top:561.36px"><span class="c">      &lt;type-group name="numbers"&gt;</span></div><div class="cl" style="top:584.75px"><span class="c">        &lt;type&gt;Whole.None&lt;/type&gt;</span></div><div class="cl" style="top:608.14px"><span class="c">        &lt;type&gt;Currency&lt;/type&gt;</span></div><div class="cl" style="top:631.53px"><span class="c">        &lt;type&gt;FP&lt;/type&gt;</span></div><div class="cl" style="top:654.92px"><span class="c">        &lt;type&gt;Decimal&lt;/type&gt;</span></div><div class="cl" style="top:678.31px"><span class="c">      &lt;/type-group&gt;</span></div><div class="cl" style="top:701.70px"><span class="c">      &lt;property name="sampleProperty" display-name-key="Property_Display_Key" description-key="Property_Desc_Key" of-type-group="numbers" usage="bound" required="true" /&gt;</span></div><div class="cl" style="top:725.09px"><span class="c">    --&gt;</span></div><div class="cl" style="top:748.48px">    <span class="p">&lt;</span><span class="g">resources</span><span class="p">&gt;</span></div><div class="cl" style="top:771.87px">      <span class="p">&lt;</span><span class="g">code</span> <span class="a">path</span><span class="e">=</span><span class="s">"index.ts"</span> <span class="a">order</span><span class="e">=</span><span class="s">"1"</span><span class="p">/&gt;</span></div><div class="cl" style="top:795.26px"><span class="c">      &lt;!-- UNCOMMENT TO ADD MORE RESOURCES</span></div><div class="cl" style="top:818.65px"><span class="c">      &lt;css path="css/FormTextReferenceControl.css" order="1" /&gt;</span></div><div class="cl" style="top:842.04px"><span class="c">      &lt;resx path="strings/FormTextReferenceControl.1033.resx" version="1.0.0" /&gt;</span></div><div class="cl" style="top:865.43px"><span class="c">      --&gt;</span></div></div><div class="b" style="left:358px;top:107px;width:84px;height:876px;overflow:hidden"><div class="ln" style="top:0.00px">1</div><div class="ln" style="top:23.39px">2</div><div class="ln" style="top:46.78px">3</div><div class="ln" style="top:70.17px">4</div><div class="ln" style="top:93.56px">5</div><div class="ln" style="top:116.95px">6</div><div class="ln" style="top:140.34px">7</div><div class="ln" style="top:163.73px">8</div><div class="ln" style="top:187.12px">9</div><div class="ln" style="top:210.51px">10</div><div class="ln" style="top:233.90px">11</div><div class="ln" style="top:257.29px">12</div><div class="ln" style="top:280.68px">13</div><div class="ln" style="top:304.07px">14</div><div class="ln" style="top:327.46px">15</div><div class="ln" style="top:350.85px">16</div><div class="ln" style="top:374.24px">17</div><div class="ln" style="top:397.63px">18</div><div class="ln" style="top:421.02px">19</div><div class="ln" style="top:444.41px">20</div><div class="ln" style="top:467.80px">21</div><div class="ln" style="top:491.19px">22</div><div class="ln" style="top:514.58px">23</div><div class="ln" style="top:537.97px">24</div><div class="ln" style="top:561.36px">25</div><div class="ln" style="top:584.75px">26</div><div class="ln" style="top:608.14px">27</div><div class="ln" style="top:631.53px">28</div><div class="ln" style="top:654.92px">29</div><div class="ln" style="top:678.31px">30</div><div class="ln" style="top:701.70px">31</div><div class="ln" style="top:725.09px">32</div><div class="ln" style="top:748.48px">33</div><div class="ln" style="top:771.87px">34</div><div class="ln" style="top:795.26px">35</div><div class="ln" style="top:818.65px">36</div><div class="ln" style="top:842.04px">37</div><div class="ln" style="top:865.43px">38</div></div><div class="b" style="left:442px;top:153.8px;width:1px;height:829.2px;background:#3d3d3d;"></div><div class="b" style="left:461px;top:177.2px;width:1px;height:805.8px;background:#3d3d3d;"></div><div class="b" style="left:480px;top:247.3px;width:1px;height:70.2px;background:#3d3d3d;"></div><div class="b" style="left:480px;top:340.9px;width:1px;height:46.8px;background:#3d3d3d;"></div><div class="b" style="left:480px;top:434.5px;width:1px;height:93.6px;background:#3d3d3d;"></div><div class="b" style="left:480px;top:621.6px;width:1px;height:210.5px;background:#3d3d3d;"></div><div class="b" style="left:480px;top:878.9px;width:1px;height:104.1px;background:#3d3d3d;"></div><div class="b" style="left:499px;top:270.7px;width:1px;height:23.4px;background:#3d3d3d;"></div><div class="b" style="left:499px;top:691.8px;width:1px;height:93.6px;background:#3d3d3d;"></div><div class="b" style="left:1931px;top:107px;width:6px;height:876px;background:linear-gradient(90deg,rgba(0,0,0,0.22),rgba(0,0,0,0))"></div><svg style="left:1938.3px;top:106.9px;" width="91.7" height="90" viewBox="0 0 91.7 90"><rect x="27.06" y="70.42" width="9.84" height="1.64" fill="#6b6b6b"/><rect x="0.00" y="0.25" width="1.64" height="1.150" fill="#808080" fill-opacity="0.5"/><rect x="1.64" y="0.25" width="2.46" height="1.150" fill="#569cd6" fill-opacity="0.5"/><rect x="4.92" y="0.25" width="5.74" height="1.150" fill="#9cdcfe" fill-opacity="0.5"/><rect x="10.66" y="0.25" width="0.82" height="1.150" fill="#cccccc" fill-opacity="0.5"/><rect x="11.48" y="0.25" width="4.10" height="1.150" fill="#ce9178" fill-opacity="0.5"/><rect x="16.40" y="0.25" width="6.56" height="1.150" fill="#9cdcfe" fill-opacity="0.5"/><rect x="22.96" y="0.25" width="0.82" height="1.150" fill="#cccccc" fill-opacity="0.5"/><rect x="23.78" y="0.25" width="5.74" height="1.150" fill="#ce9178" fill-opacity="0.5"/><rect x="30.34" y="0.25" width="1.64" height="1.150" fill="#808080" fill-opacity="0.5"/><rect x="0.00" y="1.89" width="0.82" height="1.150" fill="#808080" fill-opacity="0.5"/><rect x="0.82" y="1.89" width="6.56" height="1.150" fill="#569cd6" fill-opacity="0.5"/><rect x="7.38" y="1.89" width="0.82" height="1.150" fill="#808080" fill-opacity="0.5"/><rect x="1.64" y="3.53" width="0.82" height="1.150" fill="#808080" fill-opacity="0.5"/><rect x="2.46" y="3.53" width="5.74" height="1.150" fill="#569cd6" fill-opacity="0.5"/><rect x="9.02" y="3.53" width="7.38" height="1.150" fill="#9cdcfe" fill-opacity="0.5"/><rect x="16.40" y="3.53" width="0.82" height="1.150" fill="#cccccc" fill-opacity="0.5"/><rect x="17.22" y="3.53" width="16.40" height="1.150" fill="#ce9178" fill-opacity="0.5"/><rect x="34.44" y="3.53" width="9.02" height="1.150" fill="#9cdcfe" fill-opacity="0.5"/><rect x="43.46" y="3.53" width="0.82" height="1.150" fill="#cccccc" fill-opacity="0.5"/><rect x="44.28" y="3.53" width="21.32" height="1.150" fill="#ce9178" fill-opacity="0.5"/><rect x="66.42" y="3.53" width="5.74" height="1.150" fill="#9cdcfe" fill-opacity="0.5"/><rect x="72.16" y="3.53" width="0.82" height="1.150" fill="#cccccc" fill-opacity="0.5"/><rect x="72.98" y="3.53" width="5.74" height="1.150" fill="#ce9178" fill-opacity="0.5"/><rect x="79.54" y="3.53" width="12.16" height="1.150" fill="#9cdcfe" fill-opacity="0.5"/><rect x="3.28" y="5.17" width="21.32" height="1.150" fill="#6a9955" fill-opacity="0.5"/><rect x="25.42" y="5.17" width="3.28" height="1.150" fill="#6a9955" fill-opacity="0.5"/><rect x="29.52" y="5.17" width="6.56" height="1.150" fill="#6a9955" fill-opacity="0.5"/><rect x="36.90" y="5.17" width="5.74" height="1.150" fill="#6a9955" fill-opacity="0.5"/><rect x="43.46" y="5.17" width="3.28" height="1.150" fill="#6a9955" fill-opacity="0.5"/><rect x="47.56" y="5.17" width="2.46" height="1.150" fill="#6a9955" fill-opacity="0.5"/><rect x="50.84" y="5.17" width="4.10" height="1.150" fill="#6a9955" fill-opacity="0.5"/><rect x="55.76" y="5.17" width="2.46" height="1.150" fill="#6a9955" fill-opacity="0.5"/><rect x="59.04" y="5.17" width="5.74" height="1.150" fill="#6a9955" fill-opacity="0.5"/><rect x="65.60" y="5.17" width="1.64" height="1.150" fill="#6a9955" fill-opacity="0.5"/><rect x="68.06" y="5.17" width="4.10" height="1.150" fill="#6a9955" fill-opacity="0.5"/><rect x="72.98" y="5.17" width="6.56" height="1.150" fill="#6a9955" fill-opacity="0.5"/><rect x="80.36" y="5.17" width="5.74" height="1.150" fill="#6a9955" fill-opacity="0.5"/><rect x="86.92" y="5.17" width="1.64" height="1.150" fill="#6a9955" fill-opacity="0.5"/><rect x="89.38" y="5.17" width="2.32" height="1.150" fill="#6a9955" fill-opacity="0.5"/><rect x="3.28" y="6.81" width="1.64" height="1.150" fill="#6a9955" fill-opacity="0.5"/><rect x="5.74" y="6.81" width="1.64" height="1.150" fill="#6a9955" fill-opacity="0.5"/><rect x="8.20" y="6.81" width="1.64" height="1.150" fill="#6a9955" fill-opacity="0.5"/><rect x="10.66" y="6.81" width="2.46" height="1.150" fill="#6a9955" fill-opacity="0.5"/><rect x="13.94" y="6.81" width="4.10" height="1.150" fill="#6a9955" fill-opacity="0.5"/><rect x="18.86" y="6.81" width="2.46" height="1.150" fill="#6a9955" fill-opacity="0.5"/><rect x="22.14" y="6.81" width="6.56" height="1.150" fill="#6a9955" fill-opacity="0.5"/><rect x="29.52" y="6.81" width="6.56" height="1.150" fill="#6a9955" fill-opacity="0.5"/><rect x="36.90" y="6.81" width="4.92" height="1.150" fill="#6a9955" fill-opacity="0.5"/><rect x="42.64" y="6.81" width="2.46" height="1.150" fill="#6a9955" fill-opacity="0.5"/><rect x="45.92" y="6.81" width="2.46" height="1.150" fill="#6a9955" fill-opacity="0.5"/><rect x="49.20" y="6.81" width="12.30" height="1.150" fill="#6a9955" fill-opacity="0.5"/><rect x="62.32" y="6.81" width="2.46" height="1.150" fill="#6a9955" fill-opacity="0.5"/><rect x="65.60" y="6.81" width="1.64" height="1.150" fill="#6a9955" fill-opacity="0.5"/><rect x="68.06" y="6.81" width="2.46" height="1.150" fill="#6a9955" fill-opacity="0.5"/><rect x="71.34" y="6.81" width="2.46" height="1.150" fill="#6a9955" fill-opacity="0.5"/><rect x="74.62" y="6.81" width="2.46" height="1.150" fill="#6a9955" fill-opacity="0.5"/><rect x="77.90" y="6.81" width="4.92" height="1.150" fill="#6a9955" fill-opacity="0.5"/><rect x="83.64" y="6.81" width="4.92" height="1.150" fill="#6a9955" fill-opacity="0.5"/><rect x="89.38" y="6.81" width="2.32" height="1.150" fill="#6a9955" fill-opacity="0.5"/><rect x="3.28" y="8.45" width="7.38" height="1.150" fill="#6a9955" fill-opacity="0.5"/><rect x="4.92" y="10.09" width="18.86" height="1.150" fill="#6a9955" fill-opacity="0.5"/><rect x="24.60" y="10.09" width="12.30" height="1.150" fill="#6a9955" fill-opacity="0.5"/><rect x="6.56" y="11.73" width="27.88" height="1.150" fill="#6a9955" fill-opacity="0.5"/><rect x="4.92" y="13.37" width="20.50" height="1.150" fill="#6a9955" fill-opacity="0.5"/><rect x="3.28" y="15.01" width="7.38" height="1.150" fill="#6a9955" fill-opacity="0.5"/><rect x="4.92" y="16.65" width="18.86" height="1.150" fill="#6a9955" fill-opacity="0.5"/><rect x="24.60" y="16.65" width="13.12" height="1.150" fill="#6a9955" fill-opacity="0.5"/><rect x="4.92" y="18.29" width="20.50" height="1.150" fill="#6a9955" fill-opacity="0.5"/><rect x="3.28" y="19.93" width="2.46" height="1.150" fill="#6a9955" fill-opacity="0.5"/><rect x="3.28" y="21.57" width="0.82" height="1.150" fill="#808080" fill-opacity="0.5"/><rect x="4.10" y="21.57" width="18.04" height="1.150" fill="#569cd6" fill-opacity="0.5"/><rect x="22.96" y="21.57" width="5.74" height="1.150" fill="#9cdcfe" fill-opacity="0.5"/><rect x="28.70" y="21.57" width="0.82" height="1.150" fill="#cccccc" fill-opacity="0.5"/><rect x="29.52" y="21.57" width="5.74" height="1.150" fill="#ce9178" fill-opacity="0.5"/><rect x="35.26" y="21.57" width="0.82" height="1.150" fill="#808080" fill-opacity="0.5"/><rect x="4.92" y="23.21" width="10.66" height="1.150" fill="#6a9955" fill-opacity="0.5"/><rect x="16.40" y="23.21" width="1.64" height="1.150" fill="#6a9955" fill-opacity="0.5"/><rect x="18.86" y="23.21" width="2.46" height="1.150" fill="#6a9955" fill-opacity="0.5"/><rect x="22.14" y="23.21" width="6.56" height="1.150" fill="#6a9955" fill-opacity="0.5"/><rect x="29.52" y="23.21" width="5.74" height="1.150" fill="#6a9955" fill-opacity="0.5"/><rect x="4.92" y="24.85" width="13.94" height="1.150" fill="#6a9955" fill-opacity="0.5"/><rect x="4.92" y="26.49" width="13.94" height="1.150" fill="#6a9955" fill-opacity="0.5"/><rect x="4.92" y="28.13" width="2.46" height="1.150" fill="#6a9955" fill-opacity="0.5"/><rect x="3.28" y="29.77" width="1.64" height="1.150" fill="#808080" fill-opacity="0.5"/><rect x="4.92" y="29.77" width="18.04" height="1.150" fill="#569cd6" fill-opacity="0.5"/><rect x="22.96" y="29.77" width="0.82" height="1.150" fill="#808080" fill-opacity="0.5"/><rect x="3.28" y="31.41" width="3.28" height="1.150" fill="#6a9955" fill-opacity="0.5"/><rect x="7.38" y="31.41" width="6.56" height="1.150" fill="#6a9955" fill-opacity="0.5"/><rect x="14.76" y="31.41" width="3.28" height="1.150" fill="#6a9955" fill-opacity="0.5"/><rect x="18.86" y="31.41" width="8.20" height="1.150" fill="#6a9955" fill-opacity="0.5"/><rect x="27.88" y="31.41" width="0.82" height="1.150" fill="#6a9955" fill-opacity="0.5"/><rect x="29.52" y="31.41" width="7.38" height="1.150" fill="#6a9955" fill-opacity="0.5"/><rect x="37.72" y="31.41" width="9.84" height="1.150" fill="#6a9955" fill-opacity="0.5"/><rect x="48.38" y="31.41" width="4.10" height="1.150" fill="#6a9955" fill-opacity="0.5"/><rect x="53.30" y="31.41" width="1.64" height="1.150" fill="#6a9955" fill-opacity="0.5"/><rect x="55.76" y="31.41" width="3.28" height="1.150" fill="#6a9955" fill-opacity="0.5"/><rect x="59.86" y="31.41" width="3.28" height="1.150" fill="#6a9955" fill-opacity="0.5"/><rect x="63.96" y="31.41" width="2.46" height="1.150" fill="#6a9955" fill-opacity="0.5"/><rect x="67.24" y="31.41" width="5.74" height="1.150" fill="#6a9955" fill-opacity="0.5"/><rect x="73.80" y="31.41" width="5.74" height="1.150" fill="#6a9955" fill-opacity="0.5"/><rect x="80.36" y="31.41" width="3.28" height="1.150" fill="#6a9955" fill-opacity="0.5"/><rect x="84.46" y="31.41" width="2.46" height="1.150" fill="#6a9955" fill-opacity="0.5"/><rect x="87.74" y="31.41" width="2.46" height="1.150" fill="#6a9955" fill-opacity="0.5"/><rect x="3.28" y="33.05" width="0.82" height="1.150" fill="#808080" fill-opacity="0.5"/><rect x="4.10" y="33.05" width="6.56" height="1.150" fill="#569cd6" fill-opacity="0.5"/><rect x="11.48" y="33.05" width="3.28" height="1.150" fill="#9cdcfe" fill-opacity="0.5"/><rect x="14.76" y="33.05" width="0.82" height="1.150" fill="#cccccc" fill-opacity="0.5"/><rect x="15.58" y="33.05" width="8.20" height="1.150" fill="#ce9178" fill-opacity="0.5"/><rect x="24.60" y="33.05" width="13.12" height="1.150" fill="#9cdcfe" fill-opacity="0.5"/><rect x="37.72" y="33.05" width="0.82" height="1.150" fill="#cccccc" fill-opacity="0.5"/><rect x="38.54" y="33.05" width="18.04" height="1.150" fill="#ce9178" fill-opacity="0.5"/><rect x="57.40" y="33.05" width="12.30" height="1.150" fill="#9cdcfe" fill-opacity="0.5"/><rect x="69.70" y="33.05" width="0.82" height="1.150" fill="#cccccc" fill-opacity="0.5"/><rect x="70.52" y="33.05" width="15.58" height="1.150" fill="#ce9178" fill-opacity="0.5"/><rect x="86.92" y="33.05" width="4.78" height="1.150" fill="#9cdcfe" fill-opacity="0.5"/><rect x="3.28" y="34.69" width="3.28" height="1.150" fill="#6a9955" fill-opacity="0.5"/><rect x="4.92" y="36.33" width="6.56" height="1.150" fill="#6a9955" fill-opacity="0.5"/><rect x="12.30" y="36.33" width="4.92" height="1.150" fill="#6a9955" fill-opacity="0.5"/><rect x="18.04" y="36.33" width="5.74" height="1.150" fill="#6a9955" fill-opacity="0.5"/><rect x="24.60" y="36.33" width="7.38" height="1.150" fill="#6a9955" fill-opacity="0.5"/><rect x="32.80" y="36.33" width="2.46" height="1.150" fill="#6a9955" fill-opacity="0.5"/><rect x="36.08" y="36.33" width="1.64" height="1.150" fill="#6a9955" fill-opacity="0.5"/><rect x="38.54" y="36.33" width="10.66" height="1.150" fill="#6a9955" fill-opacity="0.5"/><rect x="50.02" y="36.33" width="8.20" height="1.150" fill="#6a9955" fill-opacity="0.5"/><rect x="4.92" y="37.97" width="6.56" height="1.150" fill="#6a9955" fill-opacity="0.5"/><rect x="4.92" y="39.61" width="9.02" height="1.150" fill="#6a9955" fill-opacity="0.5"/><rect x="14.76" y="39.61" width="12.30" height="1.150" fill="#6a9955" fill-opacity="0.5"/><rect x="6.56" y="41.25" width="18.86" height="1.150" fill="#6a9955" fill-opacity="0.5"/><rect x="6.56" y="42.89" width="17.22" height="1.150" fill="#6a9955" fill-opacity="0.5"/><rect x="6.56" y="44.53" width="12.30" height="1.150" fill="#6a9955" fill-opacity="0.5"/><rect x="6.56" y="46.17" width="16.40" height="1.150" fill="#6a9955" fill-opacity="0.5"/><rect x="4.92" y="47.81" width="10.66" height="1.150" fill="#6a9955" fill-opacity="0.5"/><rect x="4.92" y="49.45" width="7.38" height="1.150" fill="#6a9955" fill-opacity="0.5"/><rect x="13.12" y="49.45" width="17.22" height="1.150" fill="#6a9955" fill-opacity="0.5"/><rect x="31.16" y="49.45" width="31.98" height="1.150" fill="#6a9955" fill-opacity="0.5"/><rect x="63.96" y="49.45" width="27.74" height="1.150" fill="#6a9955" fill-opacity="0.5"/><rect x="3.28" y="51.09" width="2.46" height="1.150" fill="#6a9955" fill-opacity="0.5"/><rect x="3.28" y="52.73" width="0.82" height="1.150" fill="#808080" fill-opacity="0.5"/><rect x="4.10" y="52.73" width="7.38" height="1.150" fill="#569cd6" fill-opacity="0.5"/><rect x="11.48" y="52.73" width="0.82" height="1.150" fill="#808080" fill-opacity="0.5"/><rect x="4.92" y="54.37" width="0.82" height="1.150" fill="#808080" fill-opacity="0.5"/><rect x="5.74" y="54.37" width="3.28" height="1.150" fill="#569cd6" fill-opacity="0.5"/><rect x="9.84" y="54.37" width="3.28" height="1.150" fill="#9cdcfe" fill-opacity="0.5"/><rect x="13.12" y="54.37" width="0.82" height="1.150" fill="#cccccc" fill-opacity="0.5"/><rect x="13.94" y="54.37" width="8.20" height="1.150" fill="#ce9178" fill-opacity="0.5"/><rect x="22.96" y="54.37" width="4.10" height="1.150" fill="#9cdcfe" fill-opacity="0.5"/><rect x="27.06" y="54.37" width="0.82" height="1.150" fill="#cccccc" fill-opacity="0.5"/><rect x="27.88" y="54.37" width="2.46" height="1.150" fill="#ce9178" fill-opacity="0.5"/><rect x="30.34" y="54.37" width="1.64" height="1.150" fill="#808080" fill-opacity="0.5"/><rect x="4.92" y="56.01" width="3.28" height="1.150" fill="#6a9955" fill-opacity="0.5"/><rect x="9.02" y="56.01" width="7.38" height="1.150" fill="#6a9955" fill-opacity="0.5"/><rect x="17.22" y="56.01" width="1.64" height="1.150" fill="#6a9955" fill-opacity="0.5"/><rect x="19.68" y="56.01" width="2.46" height="1.150" fill="#6a9955" fill-opacity="0.5"/><rect x="22.96" y="56.01" width="3.28" height="1.150" fill="#6a9955" fill-opacity="0.5"/><rect x="27.06" y="56.01" width="7.38" height="1.150" fill="#6a9955" fill-opacity="0.5"/><rect x="4.92" y="57.65" width="3.28" height="1.150" fill="#6a9955" fill-opacity="0.5"/><rect x="9.02" y="57.65" width="31.98" height="1.150" fill="#6a9955" fill-opacity="0.5"/><rect x="41.82" y="57.65" width="7.38" height="1.150" fill="#6a9955" fill-opacity="0.5"/><rect x="50.02" y="57.65" width="1.64" height="1.150" fill="#6a9955" fill-opacity="0.5"/><rect x="4.92" y="59.29" width="4.10" height="1.150" fill="#6a9955" fill-opacity="0.5"/><rect x="9.84" y="59.29" width="40.18" height="1.150" fill="#6a9955" fill-opacity="0.5"/><rect x="50.84" y="59.29" width="12.30" height="1.150" fill="#6a9955" fill-opacity="0.5"/><rect x="63.96" y="59.29" width="1.64" height="1.150" fill="#6a9955" fill-opacity="0.5"/><rect x="4.92" y="60.93" width="2.46" height="1.150" fill="#6a9955" fill-opacity="0.5"/><rect x="3.28" y="62.57" width="1.64" height="1.150" fill="#808080" fill-opacity="0.5"/><rect x="4.92" y="62.57" width="7.38" height="1.150" fill="#569cd6" fill-opacity="0.5"/><rect x="12.30" y="62.57" width="0.82" height="1.150" fill="#808080" fill-opacity="0.5"/><rect x="3.28" y="64.21" width="3.28" height="1.150" fill="#6a9955" fill-opacity="0.5"/><rect x="7.38" y="64.21" width="7.38" height="1.150" fill="#6a9955" fill-opacity="0.5"/><rect x="15.58" y="64.21" width="1.64" height="1.150" fill="#6a9955" fill-opacity="0.5"/><rect x="18.04" y="64.21" width="4.92" height="1.150" fill="#6a9955" fill-opacity="0.5"/><rect x="23.78" y="64.21" width="2.46" height="1.150" fill="#6a9955" fill-opacity="0.5"/><rect x="27.06" y="64.21" width="7.38" height="1.150" fill="#6a9955" fill-opacity="0.5"/><rect x="35.26" y="64.21" width="2.46" height="1.150" fill="#6a9955" fill-opacity="0.5"/><rect x="3.28" y="65.85" width="12.30" height="1.150" fill="#6a9955" fill-opacity="0.5"/><rect x="4.92" y="67.49" width="10.66" height="1.150" fill="#6a9955" fill-opacity="0.5"/><rect x="16.40" y="67.49" width="21.32" height="1.150" fill="#6a9955" fill-opacity="0.5"/><rect x="38.54" y="67.49" width="12.30" height="1.150" fill="#6a9955" fill-opacity="0.5"/><rect x="51.66" y="67.49" width="1.64" height="1.150" fill="#6a9955" fill-opacity="0.5"/><rect x="4.92" y="69.13" width="10.66" height="1.150" fill="#6a9955" fill-opacity="0.5"/><rect x="16.40" y="69.13" width="21.32" height="1.150" fill="#6a9955" fill-opacity="0.5"/><rect x="38.54" y="69.13" width="12.30" height="1.150" fill="#6a9955" fill-opacity="0.5"/><rect x="51.66" y="69.13" width="1.64" height="1.150" fill="#6a9955" fill-opacity="0.5"/><rect x="4.92" y="70.77" width="10.66" height="1.150" fill="#6a9955" fill-opacity="0.5"/><rect x="16.40" y="70.77" width="21.32" height="1.150" fill="#6a9955" fill-opacity="0.5"/><rect x="38.54" y="70.77" width="12.30" height="1.150" fill="#6a9955" fill-opacity="0.5"/><rect x="51.66" y="70.77" width="1.64" height="1.150" fill="#6a9955" fill-opacity="0.5"/><rect x="4.92" y="72.41" width="10.66" height="1.150" fill="#6a9955" fill-opacity="0.5"/><rect x="16.40" y="72.41" width="23.78" height="1.150" fill="#6a9955" fill-opacity="0.5"/><rect x="41.00" y="72.41" width="12.30" height="1.150" fill="#6a9955" fill-opacity="0.5"/><rect x="54.12" y="72.41" width="1.64" height="1.150" fill="#6a9955" fill-opacity="0.5"/><rect x="4.92" y="74.05" width="10.66" height="1.150" fill="#6a9955" fill-opacity="0.5"/><rect x="16.40" y="74.05" width="26.24" height="1.150" fill="#6a9955" fill-opacity="0.5"/><rect x="43.46" y="74.05" width="12.30" height="1.150" fill="#6a9955" fill-opacity="0.5"/><rect x="56.58" y="74.05" width="1.64" height="1.150" fill="#6a9955" fill-opacity="0.5"/><rect x="4.92" y="75.69" width="10.66" height="1.150" fill="#6a9955" fill-opacity="0.5"/><rect x="16.40" y="75.69" width="18.04" height="1.150" fill="#6a9955" fill-opacity="0.5"/><rect x="35.26" y="75.69" width="12.30" height="1.150" fill="#6a9955" fill-opacity="0.5"/><rect x="48.38" y="75.69" width="1.64" height="1.150" fill="#6a9955" fill-opacity="0.5"/><rect x="4.92" y="77.33" width="10.66" height="1.150" fill="#6a9955" fill-opacity="0.5"/><rect x="16.40" y="77.33" width="11.48" height="1.150" fill="#6a9955" fill-opacity="0.5"/><rect x="28.70" y="77.33" width="12.30" height="1.150" fill="#6a9955" fill-opacity="0.5"/><rect x="41.82" y="77.33" width="1.64" height="1.150" fill="#6a9955" fill-opacity="0.5"/><rect x="4.92" y="78.97" width="10.66" height="1.150" fill="#6a9955" fill-opacity="0.5"/><rect x="16.40" y="78.97" width="10.66" height="1.150" fill="#6a9955" fill-opacity="0.5"/><rect x="27.88" y="78.97" width="12.30" height="1.150" fill="#6a9955" fill-opacity="0.5"/><rect x="41.00" y="78.97" width="1.64" height="1.150" fill="#6a9955" fill-opacity="0.5"/><rect x="3.28" y="80.61" width="13.12" height="1.150" fill="#6a9955" fill-opacity="0.5"/><rect x="3.28" y="82.25" width="2.46" height="1.150" fill="#6a9955" fill-opacity="0.5"/><rect x="1.64" y="83.89" width="1.64" height="1.150" fill="#808080" fill-opacity="0.5"/><rect x="3.28" y="83.89" width="5.74" height="1.150" fill="#569cd6" fill-opacity="0.5"/><rect x="9.02" y="83.89" width="0.82" height="1.150" fill="#808080" fill-opacity="0.5"/><rect x="0.00" y="85.53" width="1.64" height="1.150" fill="#808080" fill-opacity="0.5"/><rect x="1.64" y="85.53" width="6.56" height="1.150" fill="#569cd6" fill-opacity="0.5"/><rect x="8.20" y="85.53" width="0.82" height="1.150" fill="#808080" fill-opacity="0.5"/></svg><div class="b" style="left:2030px;top:107px;width:1px;height:876px;background:#121212;"></div><div class="b" style="left:2030px;top:106.5px;width:18px;height:1px;background:#1a1a1a;"></div>
</body></html>
